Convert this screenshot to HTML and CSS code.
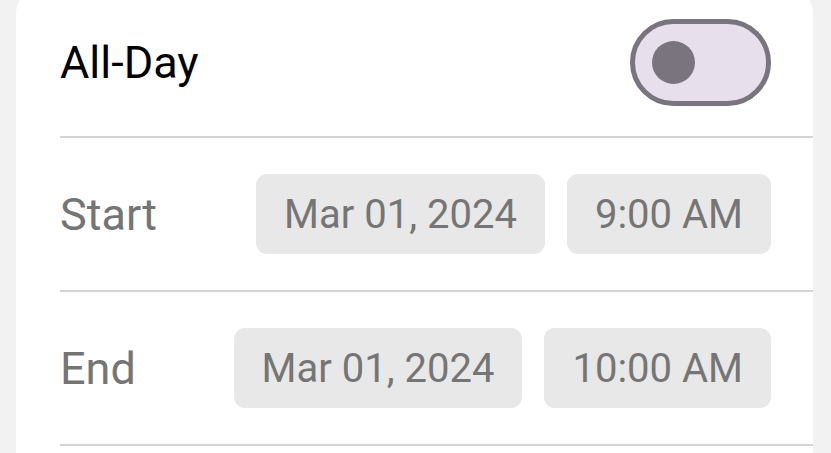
FILE: index.html
```html
<!DOCTYPE html>
<html>
<head>
<meta charset="utf-8">
<link rel="stylesheet" href="styles.css">
</head>
<body>
<div class="card">
  <div class="row row-first">
    <span class="label label-dark">All-Day</span>
    <div class="switch"><div class="thumb"></div></div>
  </div>
  <div class="row">
    <span class="label">Start</span>
    <div class="fields">
      <div class="chip">Mar 01, 2024</div>
      <div class="chip">9:00 AM</div>
    </div>
  </div>
  <div class="row">
    <span class="label">End</span>
    <div class="fields">
      <div class="chip">Mar 01, 2024</div>
      <div class="chip">10:00 AM</div>
    </div>
  </div>
</div>
</body>
</html>
```
FILE: styles.css
```css
html, body {
  margin: 0;
  padding: 0;
  background: #f2f2f2;
  font-family: Roboto, "Liberation Sans", sans-serif;
  overflow: hidden;
}
.card {
  margin: -11px 18px 0 16px;
  background: #ffffff;
  border-radius: 24px 24px 0 0;
  padding-bottom: 9px;
}
.row {
  margin-left: 44px;
  padding-right: 42px;
  height: 152px;
  border-bottom: 2px solid #d4d4d4;
  display: flex;
  align-items: center;
  justify-content: space-between;
}
.row-first {
  height: 147px;
}
.label {
  font-size: 45px;
  color: #757575;
  line-height: 1;
}
.label-dark {
  color: #000000;
}
.switch {
  width: 131px;
  height: 77px;
  border: 5px solid #79747e;
  background: #e7e0ec;
  border-radius: 50px;
  display: flex;
  align-items: center;
}
.thumb {
  width: 43px;
  height: 43px;
  border-radius: 50%;
  background: #79747e;
  margin-left: 17px;
}
.fields {
  display: flex;
  gap: 22px;
}
.chip {
  height: 80px;
  padding: 0 28px;
  background: #e8e8e8;
  border-radius: 11px;
  color: #757575;
  font-size: 40px;
  display: flex;
  align-items: center;
}
```
